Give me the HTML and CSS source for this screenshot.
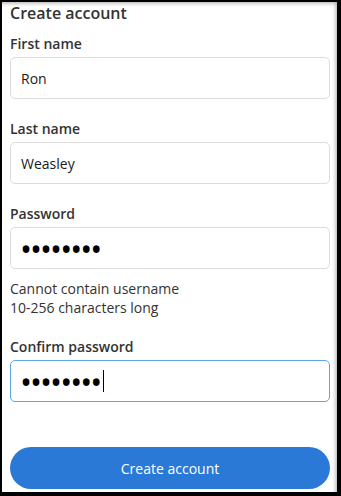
FILE: index.html
```html
<!DOCTYPE html>
<html lang="en">
<head>
    <meta charset="UTF-8" />
    <meta name="viewport" content="width=device-width, initial-scale=1.0" />
    <title>Create account</title>
    <link rel="stylesheet" href="styles.css">
</head>
<body>
    <div class="screen">
        <h1 class="title">Create account</h1>
        <form class="signup" novalidate>
            <div class="form-group">
                <label for="firstName">First name</label>
                <input type="text" id="firstName" name="firstName" value="Ron" />
            </div>
            <div class="form-group">
                <label for="lastName">Last name</label>
                <input type="text" id="lastName" name="lastName" value="Weasley" />
            </div>
            <div class="form-group">
                <label for="password">Password</label>
                <input type="password" id="password" name="password" value="12345678" />
                <div class="hint">
                    <div>Cannot contain username</div>
                    <div>10-256 characters long</div>
                </div>
            </div>
            <div class="form-group">
                <label for="confirm">Confirm password</label>
                <div class="field">
                    <input type="password" id="confirm" name="confirm" class="focused" value="12345678" />
                    <span class="caret"></span>
                </div>
            </div>
            <button type="submit">Create account</button>
        </form>
    </div>
</body>
</html>
```

FILE: styles.css
```css
html, body {
    margin: 0;
    padding: 0;
    background-color: #000;
}
body {
    font-family: "Open Sans", "Noto Sans", Arial, sans-serif;
    color: #333;
}
.screen {
    margin: 2px 4px 4px 2px;
    height: 490px;
    padding: 1px 7px 0 8px;
    box-sizing: border-box;
    background-color: white;
    box-shadow: inset -3px 3px 4px -2px rgba(0,0,0,0.35);
    overflow: hidden;
}
.title {
    margin: 0;
    font-size: 16px;
    line-height: 20px;
    font-weight: 600;
}
.signup {
    display: flex;
    flex-direction: column;
    margin-top: 11px;
}
.form-group {
    margin-bottom: 20px;
}
label {
    display: block;
    margin-bottom: 3px;
    font-size: 14px;
    line-height: 20px;
    font-weight: 600;
}
input {
    display: block;
    width: 100%;
    height: 42px;
    padding: 0 10px;
    border: 1px solid #dcdcdc;
    border-radius: 5px;
    box-sizing: border-box;
    font-family: inherit;
    font-size: 14px;
    color: #1a1a1a;
    outline: none;
}
input[type="password"] {
    padding-left: 9px;
    color: #000;
    font-size: 32px;
    letter-spacing: -2px;
}
input.focused {
    border-color: #5aa6e8;
}
.field {
    position: relative;
}
.caret {
    position: absolute;
    left: 93px;
    top: 10px;
    width: 1px;
    height: 22px;
    background-color: #000;
}
.hint {
    margin-top: 10px;
    font-size: 14px;
    line-height: 19px;
}
button {
    margin-top: 25px;
    height: 42px;
    border: none;
    border-radius: 21px;
    background-color: #2b79d6;
    color: white;
    font-family: inherit;
    font-size: 14px;
    cursor: pointer;
}
```
